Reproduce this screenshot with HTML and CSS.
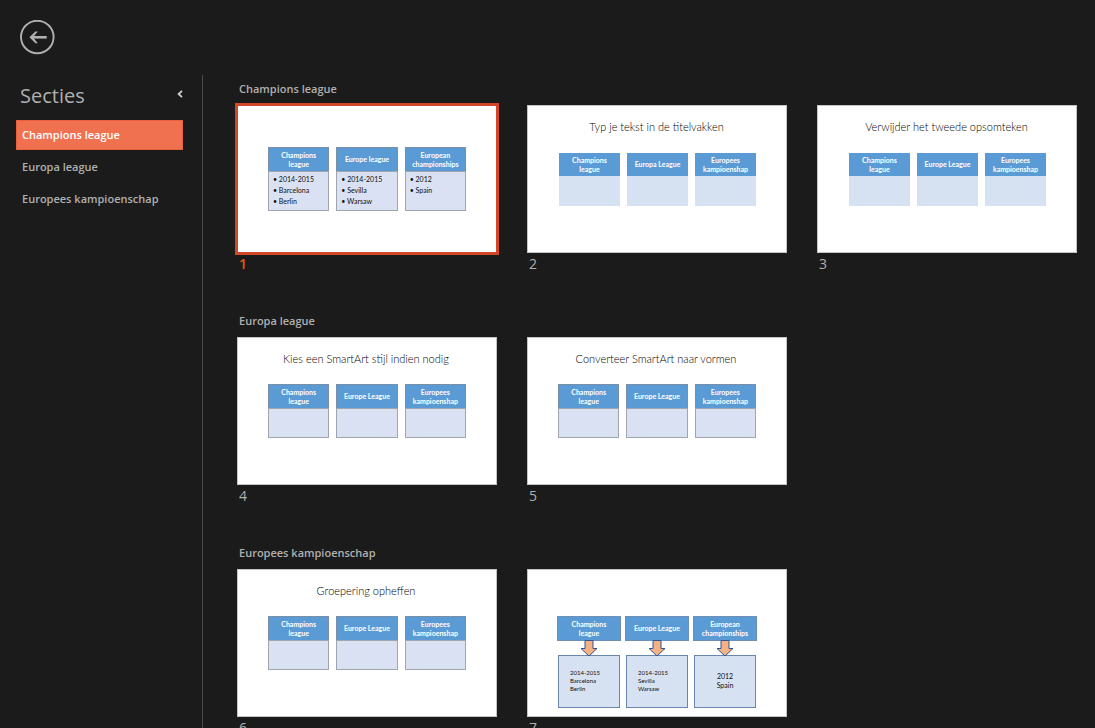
FILE: index.html
```html
<!DOCTYPE html>
<html lang="nl">
<head>
<meta charset="utf-8">
<title>Secties</title>
<link rel="stylesheet" href="styles.css">
</head>
<body>
<div class="app">
  <header class="topbar">
    <button class="back" type="button" aria-label="Terug">
      <svg viewBox="0 0 35 35" width="35" height="35" fill="none" stroke="currentColor">
        <circle cx="17.3" cy="17" r="16.3" stroke-width="1.9"/>
        <path d="M11 17.3H26.7" stroke-width="2.6"/>
        <path d="M17.8 11.4H15.4L9.4 17.3L15.4 23.2H17.8L13 17.3Z" fill="currentColor" stroke="none"/>
      </svg>
    </button>
  </header>
  <div class="workspace">
    <aside class="sidebar">
      <div class="sidebar-head">
        <h1 class="title">Secties</h1>
        <button class="collapse" type="button" aria-label="Inklappen">
          <svg viewBox="0 0 6 8" width="6" height="8" fill="none" stroke="currentColor" stroke-width="1.8"><path d="M5 .8L1.6 4L5 7.2"/></svg>
        </button>
      </div>
      <nav class="sections">
        <button class="section-link current" type="button">Champions league</button>
        <button class="section-link" type="button">Europa league</button>
        <button class="section-link" type="button">Europees kampioenschap</button>
      </nav>
    </aside>
    <main class="overview">
      <section class="group">
        <h2 class="group-title">Champions league</h2>
        <div class="slides">
          <figure class="item selected">
            <div class="slide lined">
              <div class="cards">
                <div class="card"><div class="head">Champions<br>league</div><ul class="body tall"><li>2014-2015</li><li>Barcelona</li><li>Berlin</li></ul></div>
                <div class="card"><div class="head">Europe league</div><ul class="body tall"><li>2014-2015</li><li>Sevilla</li><li>Warsaw</li></ul></div>
                <div class="card"><div class="head">European<br>championships</div><ul class="body tall"><li>2012</li><li>Spain</li></ul></div>
              </div>
            </div>
            <figcaption class="number">1</figcaption>
          </figure>
          <figure class="item">
            <div class="slide plain">
              <p class="slide-title">Typ je tekst in de titelvakken</p>
              <div class="cards">
                <div class="card"><div class="head">Champions<br>league</div><div class="body"></div></div>
                <div class="card"><div class="head">Europa League</div><div class="body"></div></div>
                <div class="card"><div class="head">Europees<br>kampioenshap</div><div class="body"></div></div>
              </div>
            </div>
            <figcaption class="number">2</figcaption>
          </figure>
          <figure class="item">
            <div class="slide plain">
              <p class="slide-title">Verwijder het tweede opsomteken</p>
              <div class="cards">
                <div class="card"><div class="head">Champions<br>league</div><div class="body"></div></div>
                <div class="card"><div class="head">Europe League</div><div class="body"></div></div>
                <div class="card"><div class="head">Europees<br>kampioenshap</div><div class="body"></div></div>
              </div>
            </div>
            <figcaption class="number">3</figcaption>
          </figure>
        </div>
      </section>
      <section class="group">
        <h2 class="group-title">Europa league</h2>
        <div class="slides">
          <figure class="item">
            <div class="slide lined">
              <p class="slide-title">Kies een SmartArt stijl indien nodig</p>
              <div class="cards">
                <div class="card"><div class="head">Champions<br>league</div><div class="body"></div></div>
                <div class="card"><div class="head">Europe League</div><div class="body"></div></div>
                <div class="card"><div class="head">Europees<br>kampioenshap</div><div class="body"></div></div>
              </div>
            </div>
            <figcaption class="number">4</figcaption>
          </figure>
          <figure class="item">
            <div class="slide lined">
              <p class="slide-title">Converteer SmartArt naar vormen</p>
              <div class="cards">
                <div class="card"><div class="head">Champions<br>league</div><div class="body"></div></div>
                <div class="card"><div class="head">Europe League</div><div class="body"></div></div>
                <div class="card"><div class="head">Europees<br>kampioenshap</div><div class="body"></div></div>
              </div>
            </div>
            <figcaption class="number">5</figcaption>
          </figure>
        </div>
      </section>
      <section class="group">
        <h2 class="group-title">Europees kampioenschap</h2>
        <div class="slides">
          <figure class="item">
            <div class="slide lined">
              <p class="slide-title">Groepering opheffen</p>
              <div class="cards">
                <div class="card"><div class="head">Champions<br>league</div><div class="body"></div></div>
                <div class="card"><div class="head">Europe League</div><div class="body"></div></div>
                <div class="card"><div class="head">Europees<br>kampioenshap</div><div class="body"></div></div>
              </div>
            </div>
            <figcaption class="number">6</figcaption>
          </figure>
          <figure class="item">
            <div class="slide flow">
              <div class="cards">
                <div class="card">
                  <div class="head">Champions<br>league</div>
                  <svg class="arrow" viewBox="0 0 18 17" width="18" height="17"><path d="M5 .5H13V8.5H17L9 16L1 8.5H5Z" fill="#f4b183" stroke="#2f5597"/></svg>
                  <div class="box">2014-2015<br>Barcelona<br>Berlin</div>
                </div>
                <div class="card">
                  <div class="head">Europe League</div>
                  <svg class="arrow" viewBox="0 0 18 17" width="18" height="17"><path d="M5 .5H13V8.5H17L9 16L1 8.5H5Z" fill="#f4b183" stroke="#2f5597"/></svg>
                  <div class="box">2014-2015<br>Sevilla<br>Warsaw</div>
                </div>
                <div class="card">
                  <div class="head">European<br>championships</div>
                  <svg class="arrow" viewBox="0 0 18 17" width="18" height="17"><path d="M5 .5H13V8.5H17L9 16L1 8.5H5Z" fill="#f4b183" stroke="#2f5597"/></svg>
                  <div class="box centered">2012<br>Spain</div>
                </div>
              </div>
            </div>
            <figcaption class="number">7</figcaption>
          </figure>
        </div>
      </section>
    </main>
  </div>
</div>
</body>
</html>
```
FILE: styles.css
```css
* { box-sizing: border-box; }
body {
  margin: 0;
  background: #1b1b1b;
  color: #b0b0b0;
  font-family: "Open Sans", "Noto Sans", sans-serif;
  font-size: 11px;
}
button {
  margin: 0;
  padding: 0;
  border: 0;
  background: none;
  color: inherit;
  font: inherit;
  cursor: pointer;
}
svg { display: block; }
h1, h2, p, ul, figure { margin: 0; padding: 0; }

.app { display: flex; flex-direction: column; height: 100vh; overflow: hidden; }
.topbar { flex: none; padding: 20px; }
.back { display: block; border-radius: 50%; }
.workspace { flex: 1; display: flex; min-height: 0; }

.sidebar { flex: none; width: 203px; padding: 0 19px 0 16px; border-right: 1px solid #4a4a4a; }
.sidebar-head { display: flex; align-items: center; justify-content: space-between; height: 45px; padding: 0 0 4px 4px; }
.title { font-size: 20px; line-height: 28px; font-weight: 500; }
.collapse { padding: 0 0 4px; color: #d0d0d0; }
.sections { display: flex; flex-direction: column; gap: 2px; }
.section-link { height: 30px; padding: 0 5px 2px; border: 1px solid transparent; text-align: left; font-weight: 600; }
.section-link.current { background: #f07150; border-color: #e8603c; color: #fff; }

.overview { flex: 1; min-width: 0; padding-left: 34px; overflow-y: auto; scrollbar-width: none; }
.group { padding-bottom: 32px; }
.group-title { height: 30px; padding-left: 2px; font-size: 11px; line-height: 28px; font-weight: 600; }
.slides { display: grid; grid-template-columns: repeat(auto-fill, 260px); gap: 30px; }
.slide {
  height: 148px;
  padding: 12px 30px 0;
  border: 1px solid #c4c4c4;
  background: #fff;
  color: #111;
  font-family: Lato, "Open Sans", sans-serif;
}
.slide.plain { padding-left: 31px; }
.selected .slide { padding-top: 41px; border-color: #d24726; box-shadow: 0 0 0 2px #d24726; }
.number { height: 22px; padding-left: 2px; font-size: 14px; line-height: 22px; }
.selected .number { color: #e8590c; font-weight: 600; }

.slide-title { height: 35px; padding-right: 2px; color: #000; font-size: 11px; line-height: 18px; font-weight: 300; text-align: center; }
.lined .slide-title { height: 34px; }
.cards { display: grid; grid-template-columns: repeat(3, 1fr); gap: 7px; }
.head {
  display: flex;
  align-items: center;
  justify-content: center;
  height: 23px;
  background: #5b9bd5;
  color: #fff;
  font-size: 7px;
  line-height: 9px;
  font-weight: 700;
  text-align: center;
}
.body { height: 30px; background: #d6e1f1; list-style: none; }
.lined .head { height: 24px; border: 1px solid #7a8fa5; border-bottom: 0; }
.lined .body { border: 1px solid #9fa6b0; background: #d9e1f2; }
.lined .body.tall { height: 40px; padding: 2px 4px 0; font-size: 7px; line-height: 11px; }
.tall li::before { content: "• "; }

.flow { padding: 46px 29px 0; }
.flow .cards { gap: 4px; }
.flow .head { height: 25px; border: 1px solid #6f8fb5; }
.arrow { margin: -1px auto -2px; position: relative; }
.box {
  display: flow-root;
  height: 53px;
  margin: 0 1px;
  padding: 13px 0 0 11px;
  border: 1px solid #6b86ac;
  background: #d6e1f1;
  font-size: 6px;
  line-height: 8px;
}
.box.centered { padding: 16px 0 0; font-size: 7px; line-height: 9px; text-align: center; }
```
